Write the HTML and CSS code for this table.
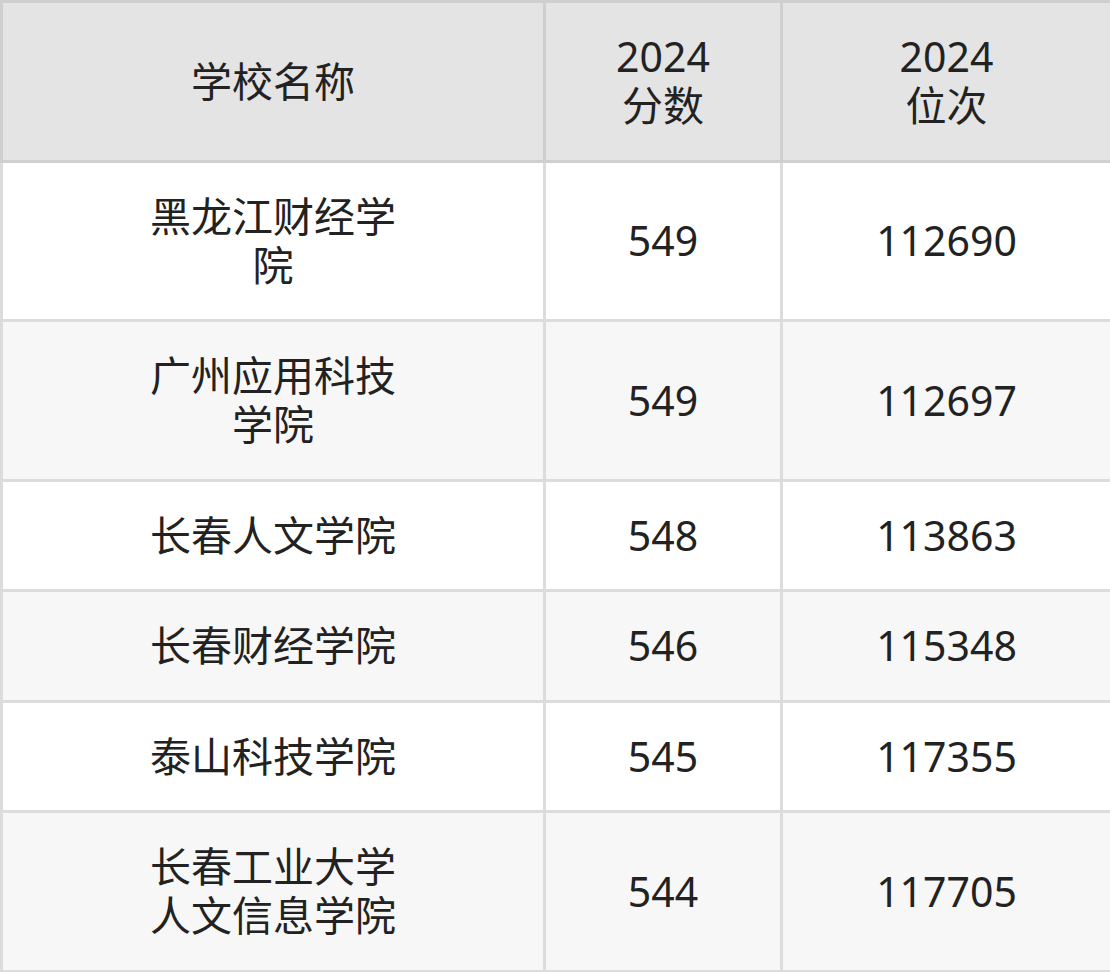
FILE: index.html
```html
<!DOCTYPE html>
<html lang="zh">
<head>
<meta charset="utf-8">
<link rel="stylesheet" href="styles.css">
</head>
<body>
<table class="score-table">
  <colgroup>
    <col class="c1"><col class="c2"><col class="c3">
  </colgroup>
  <thead>
    <tr><th>学校名称</th><th>2024<br>分数</th><th>2024<br>位次</th></tr>
  </thead>
  <tbody>
    <tr><td><div class="name">黑龙江财经学院</div></td><td>549</td><td>112690</td></tr>
    <tr class="alt"><td><div class="name">广州应用科技学院</div></td><td>549</td><td>112697</td></tr>
    <tr><td><div class="name">长春人文学院</div></td><td>548</td><td>113863</td></tr>
    <tr class="alt"><td><div class="name">长春财经学院</div></td><td>546</td><td>115348</td></tr>
    <tr><td><div class="name">泰山科技学院</div></td><td>545</td><td>117355</td></tr>
    <tr class="alt"><td><div class="name">长春工业大学人文信息学院</div></td><td>544</td><td>117705</td></tr>
  </tbody>
</table>
</body>
</html>
```
FILE: styles.css
```css
html, body {
  margin: 0;
  padding: 0;
  background: #ffffff;
}
.score-table {
  width: 1110px;
  border-collapse: collapse;
  table-layout: fixed;
  font-family: "Noto Sans", "Noto Sans CJK SC", sans-serif;
  font-size: 41px;
  line-height: 49px;
  color: #222222;
}
.c1 { width: 543px; }
.c2 { width: 237px; }
.c3 { width: 330px; }
.score-table th,
.score-table td {
  text-align: center;
  vertical-align: middle;
  border: 3px solid #dcdcdc;
  padding: 29.25px 10px;
  font-weight: normal;
}
.score-table th {
  background: #e4e4e4;
  border-color: #cfcfcf;
}
.score-table tr.alt td {
  background: #f7f7f7;
}
.name {
  max-width: 262px;
  margin: 0 auto;
}
```
